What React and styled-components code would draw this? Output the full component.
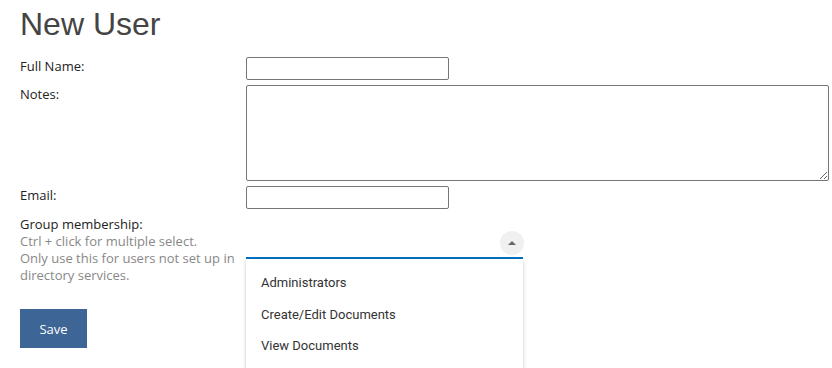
import React from "react";
import styled, { createGlobalStyle } from "styled-components";

const GlobalStyle = createGlobalStyle`
  html, body {
    margin: 0;
    padding: 0;
    background: #fff;
  }
  body {
    font-family: "Open Sans", "Liberation Sans", sans-serif;
    color: #222;
  }
`;

const Page = styled.div`
  padding: 6px 3px 0 20px;
  width: 832px;
  height: 368px;
  box-sizing: border-box;
  overflow: hidden;
`;

const Title = styled.h1`
  margin: 0 0 14px;
  font-family: "Liberation Sans", Arial, sans-serif;
  font-weight: normal;
  font-size: 32px;
  line-height: 37px;
  color: #444;
`;

const Form = styled.div`
  display: grid;
  grid-template-columns: 226px 1fr;
  grid-auto-rows: min-content;
  row-gap: 5px;
  align-items: start;
`;

const Label = styled.div`
  font-size: 13px;
  line-height: 17px;
  color: #222;
  padding-top: 1px;
`;

const Hint = styled.div`
  font-size: 13px;
  line-height: 17px;
  color: #888;
`;

const TextInput = styled.input`
  display: block;
  box-sizing: border-box;
  width: 203px;
  height: 23px;
  margin: 0;
  border: 1px solid #767676;
  border-radius: 2px;
  background: #fff;
`;

const TextArea = styled.textarea`
  box-sizing: border-box;
  display: block;
  width: 583px;
  height: 96px;
  margin: 0;
  border: 1px solid #767676;
  border-radius: 2px;
  background: #fff;
`;

const GroupLabel = styled.div`
  display: flex;
  flex-direction: column;
  padding-top: 1px;
`;

const SaveButton = styled.button`
  display: block;
  margin-top: 25px;
  width: 67px;
  height: 39px;
  border: none;
  background: #3d6595;
  color: #fff;
  font-family: "Open Sans", "Liberation Sans", sans-serif;
  font-size: 13px;
  cursor: pointer;
`;

const SelectWrap = styled.div`
  position: relative;
  width: 277px;
`;

const SelectControl = styled.div`
  display: flex;
  justify-content: flex-end;
  align-items: flex-end;
  height: 41px;
  padding-bottom: 2px;
  border-bottom: 2px solid #0071c5;
  box-sizing: content-box;
`;

const ArrowButton = styled.div`
  display: flex;
  align-items: center;
  justify-content: center;
  width: 24px;
  height: 24px;
  border-radius: 50%;
  background: #f0f0f0;
  margin-right: -1px;
`;

const Menu = styled.ul`
  position: absolute;
  top: 100%;
  left: 0;
  width: 277px;
  margin: 0;
  padding: 8px 0;
  list-style: none;
  background: #fff;
  box-shadow: 0 2px 4px rgba(0, 0, 0, 0.18), 0 0 2px rgba(0, 0, 0, 0.08);
`;

const MenuItem = styled.li`
  height: 31.5px;
  line-height: 31.5px;
  padding-left: 15px;
  font-family: Roboto, "Liberation Sans", Arial, sans-serif;
  font-size: 13px;
  color: #333;
`;

const groups = ["Administrators", "Create/Edit Documents", "View Documents"];

const App = () => {
  return (
    <Page>
      <GlobalStyle />
      <Title>New User</Title>
      <Form>
        <Label>Full Name:</Label>
        <TextInput type="text" />

        <Label>Notes:</Label>
        <TextArea />

        <Label>Email:</Label>
        <TextInput type="email" />

        <GroupLabel>
          <Label>Group membership:</Label>
          <Hint>
            Ctrl + click for multiple select.
            <br />
            Only use this for users not set up in
            <br />
            directory services.
          </Hint>
          <SaveButton type="button">Save</SaveButton>
        </GroupLabel>
        <SelectWrap>
          <SelectControl>
            <ArrowButton>
              <svg width="8" height="4" viewBox="0 0 8 4">
                <path d="M0 4 L4 0 L8 4 Z" fill="#666" />
              </svg>
            </ArrowButton>
          </SelectControl>
          <Menu>
            {groups.map((g) => (
              <MenuItem key={g}>{g}</MenuItem>
            ))}
          </Menu>
        </SelectWrap>
      </Form>
    </Page>
  );
};

export default App;
